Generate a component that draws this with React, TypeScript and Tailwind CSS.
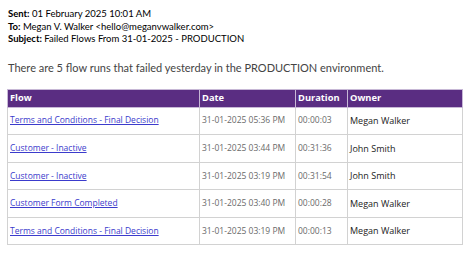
const rows = [
  { flow: 'Terms and Conditions - Final Decision', date: '31-01-2025 05:36 PM', duration: '00:00:03', owner: 'Megan Walker' },
  { flow: 'Customer - Inactive', date: '31-01-2025 03:44 PM', duration: '00:31:36', owner: 'John Smith' },
  { flow: 'Customer - Inactive', date: '31-01-2025 03:19 PM', duration: '00:31:54', owner: 'John Smith' },
  { flow: 'Customer Form Completed', date: '31-01-2025 03:40 PM', duration: '00:00:28', owner: 'Megan Walker' },
  { flow: 'Terms and Conditions - Final Decision', date: '31-01-2025 03:19 PM', duration: '00:00:13', owner: 'Megan Walker' },
]

export default function App() {
  return (
    <div className="w-[474px] h-[260px] bg-white overflow-hidden pt-[8px] pl-[8px]">
      <div className="text-[9.5px] leading-[12.5px] text-black font-['Lato',sans-serif]">
        <div><span className="font-bold">Sent:</span> 01 February 2025 10:01 AM</div>
        <div><span className="font-bold">To:</span> Megan V. Walker &lt;hello@meganvwalker.com&gt;</div>
        <div><span className="font-bold">Subject:</span> Failed Flows From 31-01-2025 - PRODUCTION</div>
      </div>
      <p className="mt-[14px] text-[11px] leading-[16px] text-[#444] font-['Lato',sans-serif]">
        There are 5 flow runs that failed yesterday in the PRODUCTION environment.
      </p>
      <table className="mt-[13px] -ml-[1px] w-[456px] table-fixed border-collapse text-[8.5px] font-['Open_Sans',sans-serif]">
        <colgroup>
          <col className="w-[192px]" />
          <col className="w-[96px]" />
          <col className="w-[52px]" />
          <col />
        </colgroup>
        <thead>
          <tr className="bg-[#5a2d82] text-white h-[18px] text-[9.3px]">
            <th className="text-left font-bold pl-[2px] border border-[#c7b8d6]">Flow</th>
            <th className="text-left font-bold pl-[2px] border border-[#c7b8d6]">Date</th>
            <th className="text-left font-bold pl-[2px] border border-[#c7b8d6]">Duration</th>
            <th className="text-left font-bold pl-[2px] border border-[#c7b8d6]">Owner</th>
          </tr>
        </thead>
        <tbody>
          {rows.map((r, i) => (
            <tr key={i} className="h-[27.6px]">
              <td className="pl-[2px] border border-[#d2d2d2] whitespace-nowrap">
                <a href="#" className="text-[#3b3bcc] underline">{r.flow}</a>
              </td>
              <td className="pl-[2px] border border-[#d2d2d2] text-[#6a6a6a] whitespace-nowrap">{r.date}</td>
              <td className="pl-[2px] border border-[#d2d2d2] text-[#6a6a6a] whitespace-nowrap">{r.duration}</td>
              <td className="pl-[2px] border border-[#d2d2d2] text-[#222] text-[9px] whitespace-nowrap">{r.owner}</td>
            </tr>
          ))}
        </tbody>
      </table>
    </div>
  )
}
